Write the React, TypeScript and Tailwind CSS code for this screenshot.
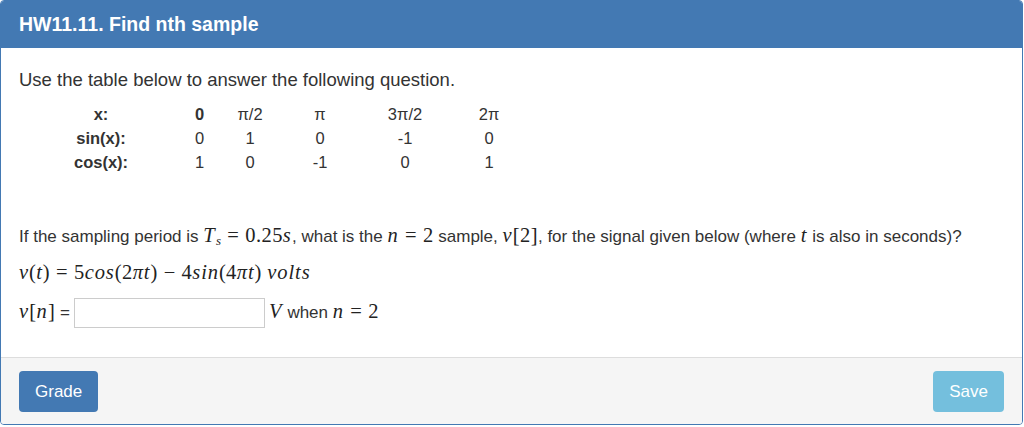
const cols = ["0", "π/2", "π", "3π/2", "2π"];

const rows = [
  { label: "sin(x):", values: ["0", "1", "0", "-1", "0"] },
  { label: "cos(x):", values: ["1", "0", "-1", "0", "1"] },
];

const V = ({ children, tight }: { children: React.ReactNode; tight?: boolean }) => (
  <span className={tight ? "italic tracking-[0.9px]" : "italic tracking-[1.2px]"}>{children}</span>
);

const M = ({ children, size = "text-[20.5px]" }: { children: React.ReactNode; size?: string }) => (
  <span className={`font-['Liberation_Serif',serif] leading-none tracking-[0.4px] text-[#222] ${size}`}>
    {children}
  </span>
);

// spaced relation / operator, as a math renderer sets them
const Rel = ({ children }: { children: React.ReactNode }) => (
  <span className="px-[6px]">{children}</span>
);

export default function App() {
  return (
    <div className="w-[1023px] bg-white font-['Liberation_Sans',Arial,sans-serif] text-[#333]">
      <div className="rounded-[4px] border border-[#4379b3] overflow-hidden">
        <div className="flex h-[47px] items-center bg-[#4379b3] px-[18px] text-[19.5px] font-bold text-white">
          HW11.11. Find nth sample
        </div>

        <div className="px-[18px] pt-[20px] pb-[29px] text-[17px] leading-[24px]">
          <p className="text-[18.5px]">Use the table below to answer the following question.</p>

          <div className="mt-[10px] ml-[7px] grid grid-cols-[150px_47px_54px_86px_84px_84px] text-center text-[16.5px] leading-[24px]">
            <div className="font-bold">x:</div>
            {cols.map((c, i) => (
              <div key={c} className={i === 0 ? "font-bold" : ""}>
                {c}
              </div>
            ))}
            {rows.map((r) => (
              <>
                <div key={r.label} className="font-bold">
                  {r.label}
                </div>
                {r.values.map((v, i) => (
                  <div key={r.label + i}>{v}</div>
                ))}
              </>
            ))}
          </div>

          <p className="mt-[51px]">
            If the sampling period is{" "}
            <M>
              <V>T</V>
              <sub className="text-[13px] italic leading-none">s</sub>
              <Rel>=</Rel>0.25<V>s</V>
            </M>
            , what is the{" "}
            <M>
              <V>n</V>
              <Rel>=</Rel>2
            </M>{" "}
            sample,{" "}
            <M>
              <V>v</V>[2]
            </M>
            , for the signal given below (where{" "}
            <M>
              <V>t</V>
            </M>{" "}
            is also in seconds)?
          </p>

          <p className="mt-[13px]">
            <M>
              <V tight>v</V>(<V tight>t</V>)<Rel>=</Rel>5<V tight>cos</V>(2<V tight>πt</V>)<Rel>−</Rel>4
              <V tight>sin</V>(4<V tight>πt</V>) <V tight>volts</V>
            </M>
          </p>

          <div className="mt-[12px] flex items-center gap-[4px]">
            <span>
              <M>
                <V>v</V>[<V>n</V>]
              </M>{" "}
              =
            </span>
            <input
              type="text"
              className="h-[30px] w-[191px] border border-[#ccc] bg-white px-2 outline-none"
            />
            <span>
              <M>
                <V>V</V>
              </M>{" "}
              when{" "}
              <M>
                <V>n</V>
                <Rel>=</Rel>2
              </M>
            </span>
          </div>
        </div>

        <div className="flex items-center justify-between border-t border-[#ddd] bg-[#f5f5f5] px-[18px] pt-[13px] pb-[12px]">
          <button className="h-[41px] rounded-[4px] bg-[#4379b3] px-[16px] text-[17px] text-white">
            Grade
          </button>
          <button className="h-[41px] rounded-[4px] bg-[#74bfdd] px-[16px] text-[17px] text-white">
            Save
          </button>
        </div>
      </div>
    </div>
  );
}
